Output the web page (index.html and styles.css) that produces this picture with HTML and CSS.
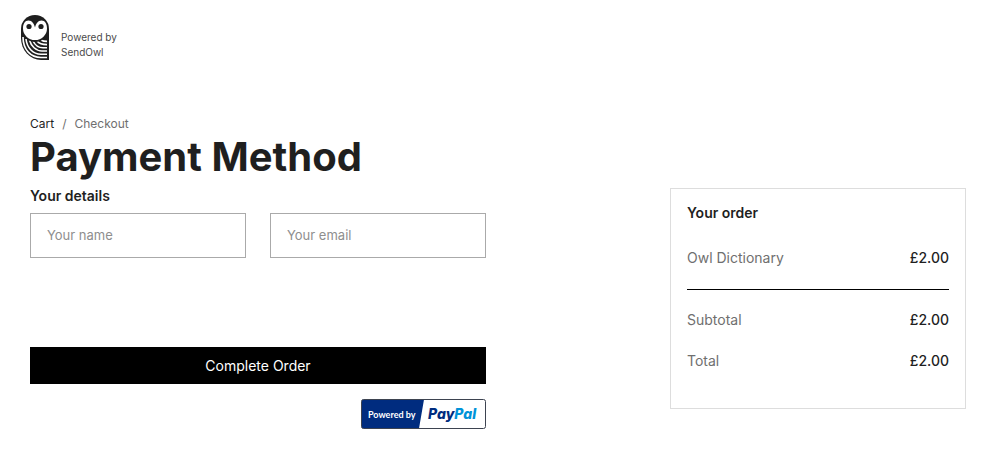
FILE: index.html
```html
<!DOCTYPE html>
<html lang="en">

<head>
    <meta charset="UTF-8">
    <meta name="viewport" content="width=device-width, initial-scale=1.0">
    <title>Payment Method</title>
    <link rel="stylesheet" href="styles.css">
</head>

<body>
    <header class="header">
        <svg class="logo" viewBox="0 0 28 45" aria-hidden="true">
            <path d="M0 14a14 14 0 0 1 28 0v31H20A20 22 0 0 1 0 23z" fill="#1f1f1f" />
            <g fill="none" stroke="#fff" stroke-width="1.600">
                <path d="M2 22C2 35 10 42.500 20 42.500H26" />
                <path d="M5 24C6 33 12 39.200 20 39.200H26" />
                <path d="M8.500 25C10 31 15 36 21 36H26" />
                <path d="M12 26C14 30 17 32.800 22 32.800H26" />
                <path d="M16 26C18 28.500 20 29.600 26 29.600" />
                <path d="M20 25C22 26.200 23 26.400 26 26.400" />
            </g>
            <circle cx="14" cy="14" r="13" fill="#1f1f1f" />
            <path d="M14 12.500C13.300 9 11 5.500 7.500 5.500C4 5.500 2 9 2 13.500a12 11.500 0 0 0 24 0C26 9 24 5.500 20.500 5.500C17 5.500 14.700 9 14 12.500z" fill="#fff" />
            <circle cx="8" cy="11.500" r="2.600" fill="#1f1f1f" />
            <circle cx="20" cy="11.500" r="2.600" fill="#1f1f1f" />
        </svg>
        <p class="powered">Powered by<br>SendOwl</p>
    </header>

    <main class="checkout">
        <form class="payment">
            <nav class="breadcrumb" aria-label="Breadcrumb">
                <a href="#">Cart</a>
                <span>/</span>
                <span>Checkout</span>
            </nav>
            <h1>Payment Method</h1>
            <h2>Your details</h2>
            <div class="fields">
                <input type="text" id="name" aria-label="Your name" placeholder="Your name">
                <input type="email" id="email" aria-label="Your email" placeholder="Your email">
            </div>
            <button type="submit" class="submit">Complete Order</button>
            <svg class="paypal" viewBox="0 0 125 30" role="img" aria-label="Powered by PayPal">
                <rect x="0.500" y="0.500" width="124" height="29" rx="2" fill="#fff" />
                <path d="M2.500 0.500H63L58 29.500H2.500a2 2 0 0 1-2-2v-25a2 2 0 0 1 2-2z" fill="#002c7f" />
                <rect x="0.500" y="0.500" width="124" height="29" rx="2" fill="none" stroke="#3d4350" />
                <text class="paypal-note" x="7" y="19">Powered by</text>
                <text class="paypal-name" x="67" y="20">Pay<tspan>Pal</tspan></text>
            </svg>
        </form>

        <section class="order">
            <h2>Your order</h2>
            <dl class="items">
                <div class="row">
                    <dt>Owl Dictionary</dt>
                    <dd>£2.00</dd>
                </div>
            </dl>
            <dl class="totals">
                <div class="row">
                    <dt>Subtotal</dt>
                    <dd>£2.00</dd>
                </div>
                <div class="row">
                    <dt>Total</dt>
                    <dd>£2.00</dd>
                </div>
            </dl>
        </section>
    </main>
</body>

</html>
```

FILE: styles.css
```css
* {
    box-sizing: border-box;
}

body {
    margin: 0;
    background: #fff;
    color: #1f1f1f;
    font-family: Inter, sans-serif;
    font-size: 14px;
    line-height: 20px;
}

h1,
h2,
p,
dl,
dd {
    margin: 0;
}

.header {
    display: flex;
    align-items: flex-end;
    gap: 12px;
    padding: 15px 21px 0;
}

.logo {
    width: 28px;
    height: 45px;
}

.powered {
    color: #4a4a4a;
    font-size: 10px;
    line-height: 15px;
}

.checkout {
    display: flex;
    justify-content: space-between;
    align-items: flex-start;
    gap: 24px;
    padding: 56px 26px 30px 30px;
}

.payment {
    display: flex;
    flex-direction: column;
    flex: 0 1 456px;
}

.breadcrumb {
    display: flex;
    gap: 8px;
    color: #6f6f6f;
    font-size: 12px;
    line-height: 16px;
}

.breadcrumb a {
    color: #1f1f1f;
    text-decoration: none;
}

h1 {
    font-size: 40px;
    font-weight: 700;
    line-height: 50px;
}

h2 {
    font-size: 14px;
    font-weight: 600;
    line-height: 28px;
}

.fields {
    display: grid;
    grid-template-columns: 1fr 1fr;
    gap: 24px;
    margin-top: 3px;
}

.fields input {
    width: 100%;
    height: 45px;
    padding: 0 16px 2px;
    border: 1px solid #aaa;
    border-radius: 0;
    background: #fff;
    color: #1f1f1f;
    font-family: inherit;
    font-size: 13px;
}

.fields input::placeholder {
    color: #8e8e8e;
}

.submit {
    height: 37px;
    margin-top: 89px;
    border: 0;
    background: #000;
    color: #fff;
    font-family: inherit;
    font-size: 14px;
    cursor: pointer;
}

.paypal {
    align-self: flex-end;
    width: 125px;
    height: 30px;
    margin-top: 15px;
}

.paypal-note {
    fill: #fff;
    font-family: Lato, sans-serif;
    font-size: 9px;
    font-weight: 700;
}

.paypal-name {
    fill: #002c7f;
    font-family: Inter, sans-serif;
    font-size: 14px;
    font-style: italic;
    font-weight: 800;
}

.paypal-name tspan {
    fill: #0093d9;
}

.order {
    flex: 0 1 296px;
    margin-top: 72px;
    padding: 10px 16px 26px;
    border: 1px solid #ddd;
}

.row {
    display: flex;
    justify-content: space-between;
    line-height: 41px;
}

.row dt {
    color: #6f6f6f;
}

.row dd {
    font-weight: 500;
}

.items {
    padding: 10px 0 11px;
    border-bottom: 1px solid #000;
}

.totals {
    padding: 9px 0 1px;
}
```
